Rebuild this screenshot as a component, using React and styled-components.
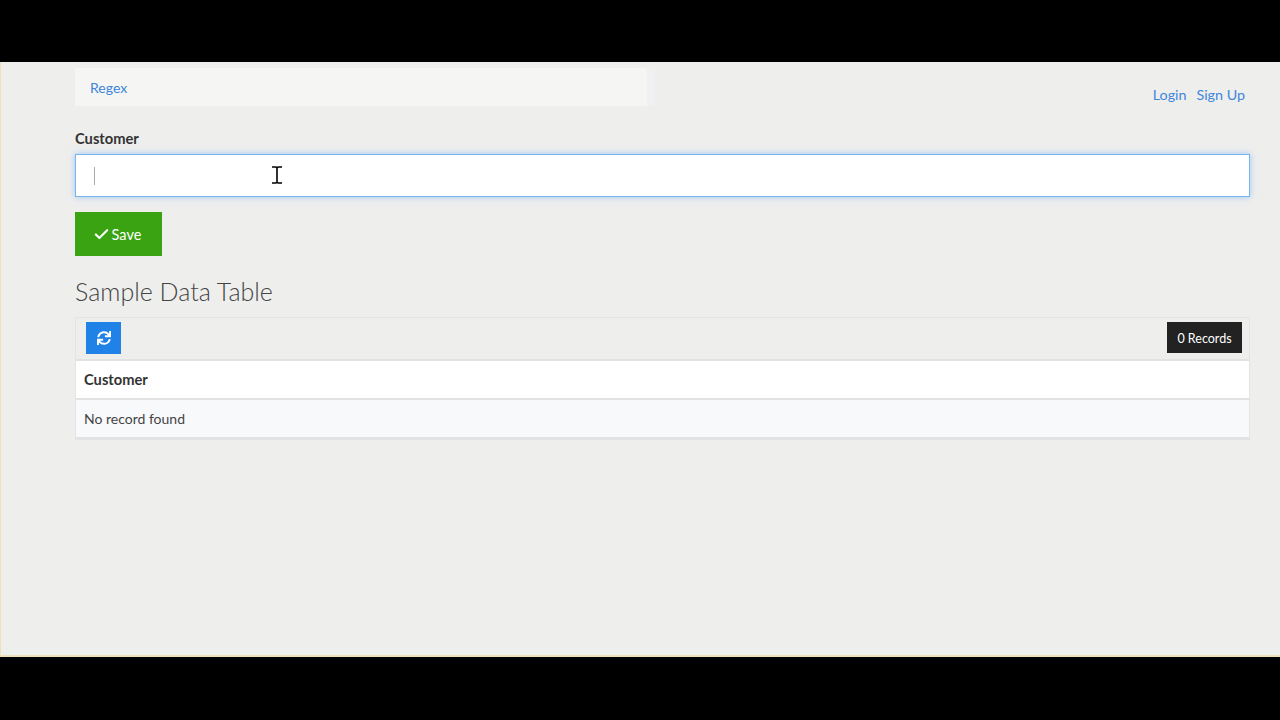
import styled, { createGlobalStyle } from 'styled-components';
import { Check } from 'lucide-react';
import { FaSync } from 'react-icons/fa';

const GlobalStyle = createGlobalStyle`
  html, body {
    margin: 0;
    padding: 0;
    height: 100%;
    background: #000;
    overflow: hidden;
  }
  body {
    font-family: "Lato", "Noto Sans", sans-serif;
  }
`;

const Screen = styled.div`
  height: 720px;
  padding: 62px 0 63px;
  box-sizing: border-box;
  background: #000;
`;

const Page = styled.div`
  height: 100%;
  box-sizing: border-box;
  padding: 6px 30px 0 74px;
  background: #eeeeed;
  border-left: 1px solid #f0dfb8;
  border-bottom: 2px solid #f0dfb8;
`;

const Nav = styled.div`
  display: flex;
  justify-content: space-between;
  align-items: flex-end;
  height: 38px;
`;

const Brand = styled.div`
  width: 580px;
  height: 38px;
  display: flex;
  align-items: center;
  box-sizing: border-box;
  padding-left: 15px;
  background: #f5f5f3;
  border-right: 8px solid #f0f0f2;
`;

const NavLink = styled.a`
  color: #3f86dc;
  font-size: ${p => p.$size || '14.3px'};
  text-decoration: none;
`;

const NavLinks = styled.div`
  display: flex;
  gap: 10px;
  padding: 0 5px 3px 0;
`;

const Label = styled.div`
  margin-top: 23px;
  color: #333;
  font-size: 14.7px;
  font-weight: 700;
  line-height: 18px;
`;

const Field = styled.div`
  position: relative;
  height: 43px;
  margin-top: 7px;
  box-sizing: border-box;
  background: #fff;
  border: 1px solid #78b4f0;
  box-shadow: 0 0 6px rgba(90, 165, 240, 0.55);
`;

const Caret = styled.span`
  position: absolute;
  left: 18px;
  top: 12px;
  width: 1px;
  height: 18px;
  background: #aaa;
`;

const Cursor = styled.svg`
  position: absolute;
  left: 195px;
  top: 11px;
`;

const SaveButton = styled.button`
  display: flex;
  align-items: center;
  justify-content: center;
  gap: 2px;
  width: 87px;
  height: 44px;
  margin-top: 15px;
  padding: 0 3px 0 0;
  border: 0;
  background: #3aa312;
  color: #fff;
  font-family: inherit;
  font-size: 14.5px;
`;

const Heading = styled.h3`
  margin: 20px 0 0;
  color: #444;
  font-size: 25px;
  font-weight: 300;
  line-height: 30px;
`;

const Panel = styled.div`
  margin-top: 11px;
  border: 1px solid #e4e4e4;
`;

const Toolbar = styled.div`
  display: flex;
  justify-content: space-between;
  align-items: center;
  height: 43px;
  box-sizing: border-box;
  padding: 0 7px 2px 10px;
  background: #eeeeed;
  border-bottom: 2px solid #e2e2e2;
`;

const RefreshButton = styled.button`
  display: flex;
  align-items: center;
  justify-content: center;
  width: 35px;
  height: 32px;
  padding: 0;
  border: 0;
  background: #2081e6;
  color: #fff;
  font-size: 14px;
`;

const RecordCount = styled.div`
  display: flex;
  align-items: center;
  justify-content: center;
  width: 75px;
  height: 31px;
  box-sizing: border-box;
  padding-top: 2px;
  background: #222;
  color: #fff;
  font-size: 12.5px;
`;

const Row = styled.div`
  display: flex;
  align-items: center;
  height: 39px;
  box-sizing: border-box;
  padding: 0 0 ${p => (p.$head ? '2px' : '0')} 8px;
  color: ${p => (p.$head ? '#333' : '#444')};
  font-size: ${p => (p.$head ? '14.7px' : '14px')};
  font-weight: ${p => (p.$head ? 700 : 400)};
  background: ${p => (p.$head ? '#fff' : '#f8f9fb')};
  border-bottom: 2px solid #e2e2e2;
`;

export default function App() {
  return (
    <Screen>
      <GlobalStyle />
      <Page>
        <Nav>
          <Brand>
            <NavLink href="#" $size="14px">Regex</NavLink>
          </Brand>
          <NavLinks>
            <NavLink href="#">Login</NavLink>
            <NavLink href="#">Sign Up</NavLink>
          </NavLinks>
        </Nav>
        <Label>Customer</Label>
        <Field>
          <Caret />
          <Cursor width="12" height="18" viewBox="0 0 12 18" fill="none" stroke="#000">
            <path d="M1 1h4l1 1 1-1h4M6 2v14M1 17h4l1-1 1 1h4" strokeWidth="1.6" />
          </Cursor>
        </Field>
        <SaveButton>
          <Check size={17} strokeWidth={3} />
          Save
        </SaveButton>
        <Heading>Sample Data Table</Heading>
        <Panel>
          <Toolbar>
            <RefreshButton>
              <FaSync />
            </RefreshButton>
            <RecordCount>0 Records</RecordCount>
          </Toolbar>
          <Row $head>Customer</Row>
          <Row>No record found</Row>
        </Panel>
      </Page>
    </Screen>
  );
}
